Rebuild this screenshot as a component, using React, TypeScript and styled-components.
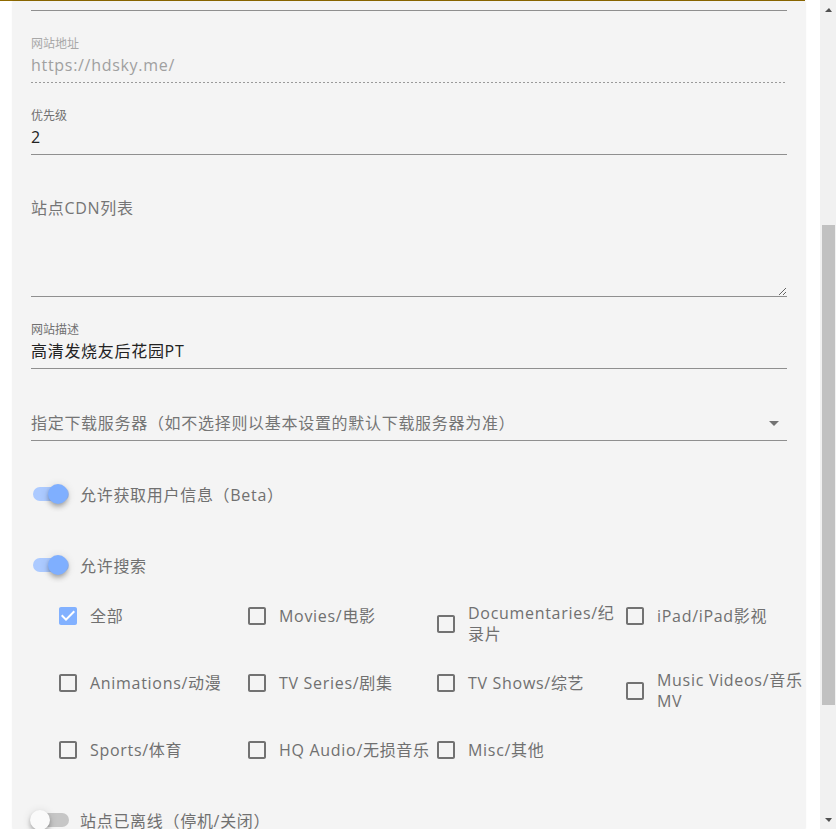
import React from "react";
import styled, { createGlobalStyle } from "styled-components";

const GlobalStyle = createGlobalStyle`
  html, body {
    margin: 0;
    padding: 0;
    background: #ffffff;
  }
  body {
    font-family: "Open Sans", "Noto Sans CJK SC", sans-serif;
  }
`;

const Screen = styled.div`
  display: flex;
  height: 829px;
  overflow: hidden;
  background: #ffffff;
`;

const Frame = styled.div`
  width: 805px;
  flex-shrink: 0;
  box-sizing: border-box;
  border-top: 1px solid #8f6a00;
  padding-left: 13px;
  display: flex;
`;

const Panel = styled.div`
  flex: 1;
  min-width: 0;
  display: flex;
  flex-direction: column;
  padding: 0 18px;
  background: #f4f4f4;
  box-shadow: 0 0 2px rgba(0, 0, 0, 0.14);
  font-size: 16px;
  letter-spacing: 0.7px;

  & > * {
    flex-shrink: 0;
  }
`;

const CutEdge = styled.div`
  height: 9px;
  border-bottom: 1px solid #8f8f8f;
`;

const Field = styled.div`
  margin-top: 24px;
  display: flex;
  flex-direction: column;
`;

const FieldLabel = styled.div<{ $disabled?: boolean }>`
  height: 16px;
  font-size: 12px;
  line-height: 17px;
  letter-spacing: 0;
  color: ${(p) => (p.$disabled ? "#a8a8a8" : "#707070")};
`;

const FieldValue = styled.div<{ $tone?: "dark" | "muted" | "hint" }>`
  margin-top: 3px;
  height: 22px;
  padding-bottom: 6px;
  display: flex;
  align-items: center;
  line-height: 22px;
  color: ${(p) =>
    p.$tone === "muted" ? "#a0a0a0" : p.$tone === "hint" ? "#757575" : "#222222"};
`;

const ValueText = styled.span`
  flex: 1;
  white-space: nowrap;
`;

const Underline = styled.div<{ $dashed?: boolean }>`
  height: 1px;
  background: ${(p) =>
    p.$dashed
      ? "repeating-linear-gradient(to right, #9a9a9a 0, #9a9a9a 2px, transparent 2px, transparent 4px)"
      : "#8f8f8f"};
`;

const NotesArea = styled.textarea`
  margin: 24px 0 0;
  box-sizing: border-box;
  height: 118px;
  padding: 18px 0 0;
  border: none;
  border-bottom: 1px solid #8f8f8f;
  border-radius: 0;
  background: transparent;
  font-family: inherit;
  font-size: 16px;
  line-height: 22px;
  letter-spacing: inherit;
  color: #222222;
  resize: vertical;
  outline: none;

  &::placeholder {
    color: #757575;
    opacity: 1;
  }
`;

const DropIcon = styled.svg`
  width: 24px;
  height: 24px;
  margin-right: 1px;
  fill: #737373;
  flex-shrink: 0;
`;

const ToggleRow = styled.div<{ $top: number }>`
  margin-top: ${(p) => p.$top}px;
  height: 24px;
  display: flex;
  align-items: center;
  color: #707070;
  white-space: nowrap;
`;

const SwitchBox = styled.div`
  position: relative;
  width: 38px;
  height: 24px;
  flex-shrink: 0;
`;

const SwitchTrack = styled.div<{ $on: boolean }>`
  position: absolute;
  left: 2px;
  top: 5px;
  width: 36px;
  height: 14px;
  border-radius: 7px;
  background: ${(p) => (p.$on ? "#accaff" : "#c6c6c6")};
`;

const SwitchThumb = styled.div<{ $on: boolean }>`
  position: absolute;
  top: 2px;
  left: ${(p) => (p.$on ? "17px" : "-1px")};
  width: 20px;
  height: 20px;
  border-radius: 50%;
  background: ${(p) => (p.$on ? "#7fafff" : "#fafafa")};
  box-shadow: 0 2px 4px -1px rgba(0, 0, 0, 0.2), 0 4px 5px 0 rgba(0, 0, 0, 0.14),
    0 1px 10px 0 rgba(0, 0, 0, 0.12);
`;

const ToggleText = styled.span`
  margin-left: 11px;
`;

const CategoryGrid = styled.div`
  margin: 23px 0 0 25px;
  width: 756px;
  display: grid;
  grid-template-columns: repeat(4, 189px);
  row-gap: 19px;
  align-items: start;
`;

const CategoryItem = styled.label`
  min-height: 32px;
  display: flex;
  align-items: center;
`;

const BoxIcon = styled.svg<{ $checked: boolean }>`
  width: 24px;
  height: 24px;
  flex-shrink: 0;
  fill: ${(p) => (p.$checked ? "#82b1ff" : "#727272")};
`;

const CheckMark = styled.path`
  fill: #ffffff;
`;

const CategoryText = styled.span`
  flex: 1;
  min-width: 0;
  margin-left: 10px;
  padding: 3px 0;
  line-height: 21px;
  color: #707070;
`;

const ScrollBar = styled.div`
  margin-left: 15px;
  width: 16px;
  flex-shrink: 0;
  display: flex;
  flex-direction: column;
  background: #f1f1f1;
`;

const ScrollArrow = styled.div<{ $down?: boolean }>`
  height: ${(p) => (p.$down ? "18px" : "20px")};
  margin-top: ${(p) => (p.$down ? "auto" : "0")};
  display: flex;
  align-items: center;
  justify-content: center;

  &::after {
    content: "";
    width: 0;
    height: 0;
    border-left: 4px solid transparent;
    border-right: 3px solid transparent;
    ${(p) =>
      p.$down ? "border-top: 4px solid #505050;" : "border-bottom: 4px solid #505050;"}
  }
`;

const ScrollThumb = styled.div`
  margin: 205px 1px 0 2px;
  height: 480px;
  background: #c1c1c1;
`;

const categories = [
  { name: "全部", checked: true },
  { name: "Movies/电影" },
  { name: "Documentaries/纪录片" },
  { name: "iPad/iPad影视" },
  { name: "Animations/动漫" },
  { name: "TV Series/剧集" },
  { name: "TV Shows/综艺" },
  { name: "Music Videos/音乐MV" },
  { name: "Sports/体育" },
  { name: "HQ Audio/无损音乐" },
  { name: "Misc/其他" },
];

function Toggle({ on, label, top }: { on: boolean; label: string; top: number }) {
  return (
    <ToggleRow $top={top}>
      <SwitchBox>
        <SwitchTrack $on={on} />
        <SwitchThumb $on={on} />
      </SwitchBox>
      <ToggleText>{label}</ToggleText>
    </ToggleRow>
  );
}

function Category({ name, checked = false }: { name: string; checked?: boolean }) {
  return (
    <CategoryItem>
      <BoxIcon $checked={checked} viewBox="0 0 24 24">
        {checked ? (
          <>
            <path d="M19 3H5c-1.11 0-2 .9-2 2v14c0 1.1.89 2 2 2h14c1.11 0 2-.9 2-2V5c0-1.1-.89-2-2-2z" />
            <CheckMark d="M10 17l-5-5 1.41-1.41L10 14.17l7.59-7.59L19 8l-9 9z" />
          </>
        ) : (
          <path d="M19 5v14H5V5h14m0-2H5c-1.1 0-2 .9-2 2v14c0 1.1.9 2 2 2h14c1.1 0 2-.9 2-2V5c0-1.1-.9-2-2-2z" />
        )}
      </BoxIcon>
      <CategoryText>{name}</CategoryText>
    </CategoryItem>
  );
}

export default function App() {
  return (
    <Screen>
      <GlobalStyle />
      <Frame>
        <Panel>
          <CutEdge />

          <Field>
            <FieldLabel $disabled>网站地址</FieldLabel>
            <FieldValue $tone="muted">
              <ValueText>https://hdsky.me/</ValueText>
            </FieldValue>
            <Underline $dashed />
          </Field>

          <Field>
            <FieldLabel>优先级</FieldLabel>
            <FieldValue>
              <ValueText>2</ValueText>
            </FieldValue>
            <Underline />
          </Field>

          <NotesArea placeholder="站点CDN列表" />

          <Field>
            <FieldLabel>网站描述</FieldLabel>
            <FieldValue>
              <ValueText>高清发烧友后花园PT</ValueText>
            </FieldValue>
            <Underline />
          </Field>

          <Field>
            <FieldLabel />
            <FieldValue $tone="hint">
              <ValueText>指定下载服务器（如不选择则以基本设置的默认下载服务器为准）</ValueText>
              <DropIcon viewBox="0 0 24 24">
                <path d="M7 10l5 5 5-5z" />
              </DropIcon>
            </FieldValue>
            <Underline />
          </Field>

          <Toggle on top={41} label="允许获取用户信息（Beta）" />
          <Toggle on top={47} label="允许搜索" />

          <CategoryGrid>
            {categories.map((c) => (
              <Category key={c.name} name={c.name} checked={c.checked} />
            ))}
          </CategoryGrid>

          <Toggle on={false} top={42} label="站点已离线（停机/关闭）" />
        </Panel>
      </Frame>
      <ScrollBar>
        <ScrollArrow />
        <ScrollThumb />
        <ScrollArrow $down />
      </ScrollBar>
    </Screen>
  );
}
